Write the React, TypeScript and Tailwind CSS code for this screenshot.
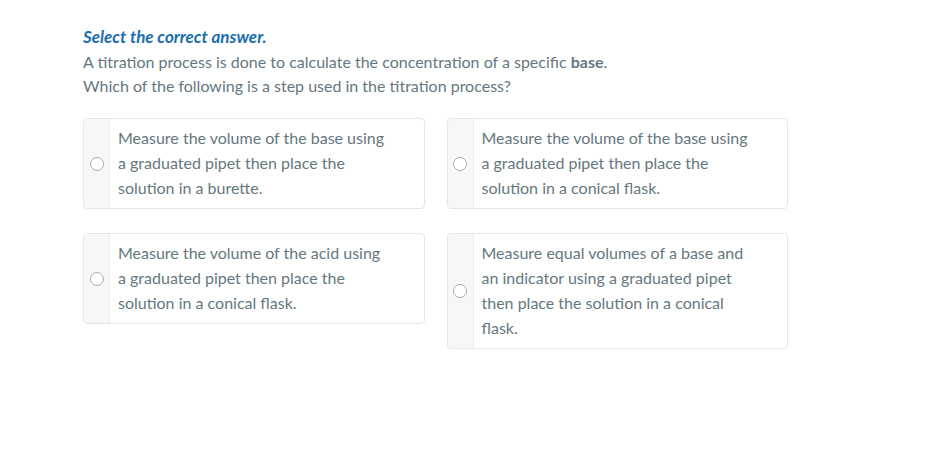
const options = [
  "Measure the volume of the base using a graduated pipet then place the solution in a burette.",
  "Measure the volume of the base using a graduated pipet then place the solution in a conical flask.",
  "Measure the volume of the acid using a graduated pipet then place the solution in a conical flask.",
  "Measure equal volumes of a base and an indicator using a graduated pipet then place the solution in a conical flask.",
];

const Option = ({ text }: { text: string }) => (
  <label className="flex items-stretch border border-[#e6e6e6] rounded-[4px] bg-white overflow-hidden cursor-pointer">
    <div className="w-[26px] shrink-0 bg-[#f7f7f7] border-r border-[#ececec] flex items-center justify-center">
      <span className="w-[14px] h-[14px] rounded-full border border-[#ababab] bg-white" />
    </div>
    <div className="pt-[6px] pb-[8px] pl-[8px] pr-[36px] text-[16px] leading-[25px] text-[#66777f]">
      {text}
    </div>
  </label>
);

const App = () => {
  return (
    <div
      className="min-h-screen bg-white pt-[25px] pl-[83px]"
      style={{ fontFamily: "Lato, 'Liberation Sans', sans-serif" }}
    >
      <div className="w-[705px]">
        <p className="text-[17px] leading-[24px] font-bold italic text-[#1b6eae]">
          Select the correct answer.
        </p>
        <p className="text-[16px] leading-[25px] text-[#66777f]">
          A titration process is done to calculate the concentration of a specific{" "}
          <span className="font-bold">base</span>.
        </p>
        <p className="text-[16px] leading-[24px] text-[#66777f]">
          Which of the following is a step used in the titration process?
        </p>
        <div className="grid grid-cols-2 gap-x-[22px] gap-y-[24px] items-start mt-[20px]">
          {options.map((o) => (
            <Option key={o} text={o} />
          ))}
        </div>
      </div>
    </div>
  );
};

export default App;
